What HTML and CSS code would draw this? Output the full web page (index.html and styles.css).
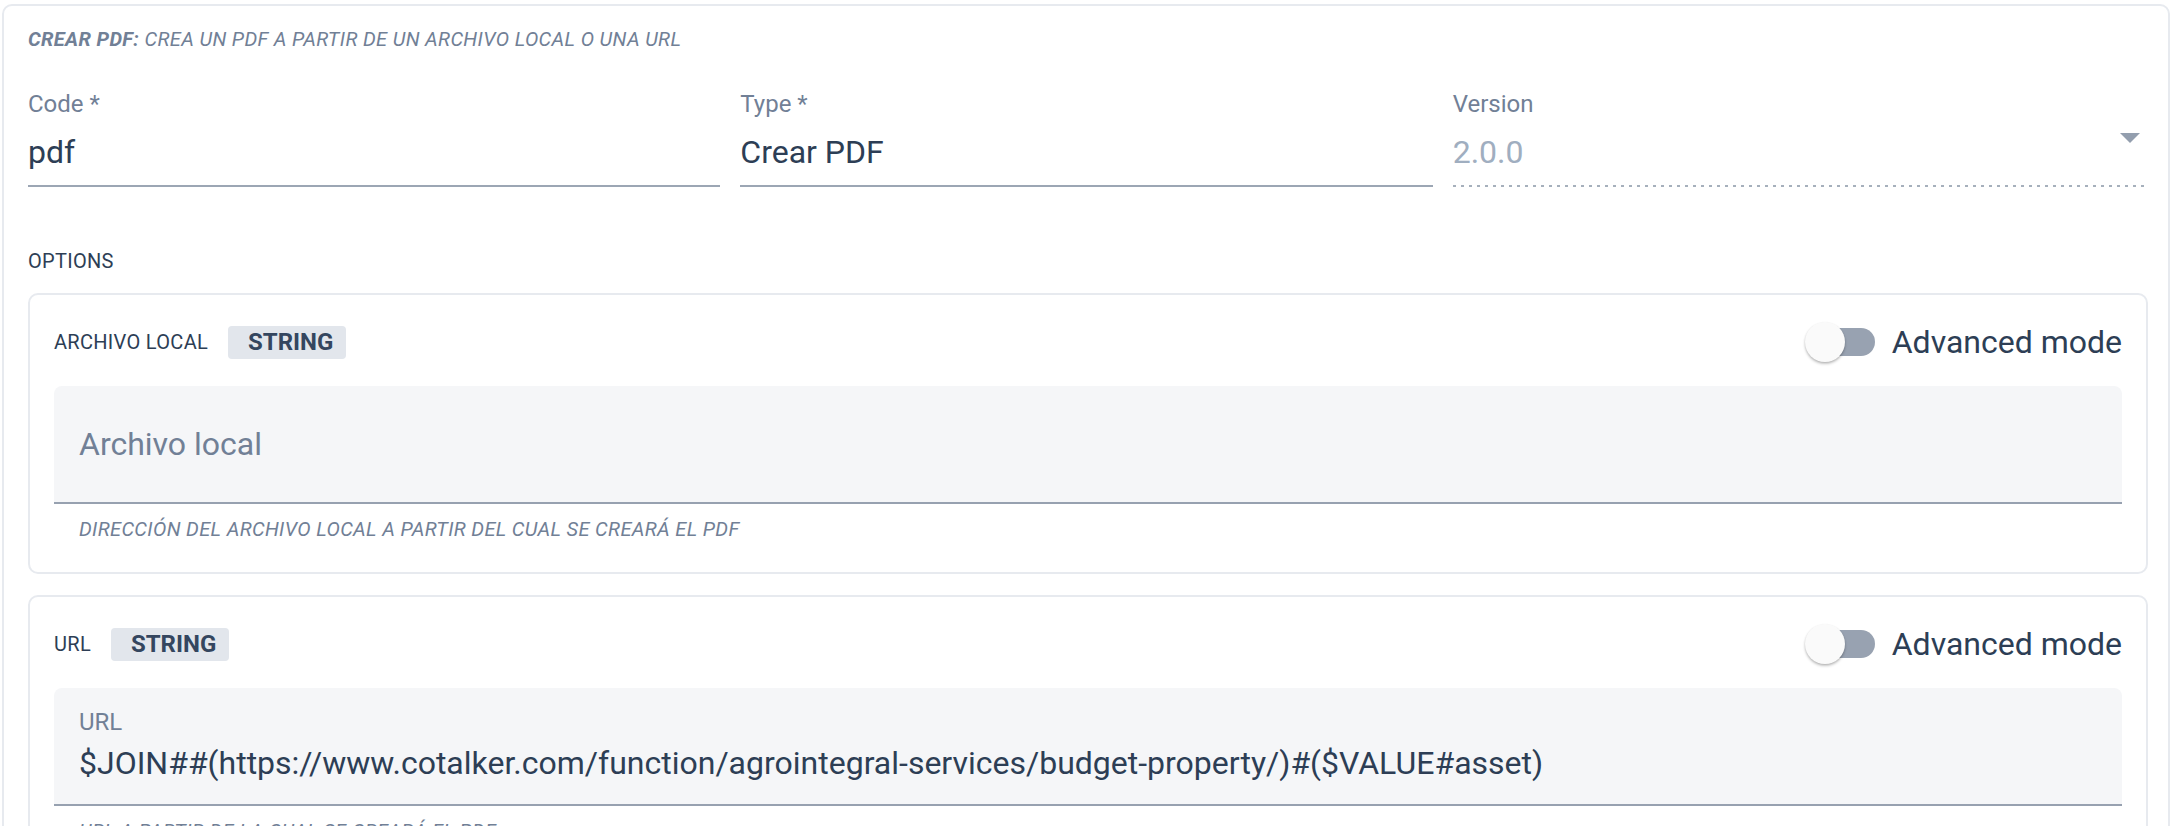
FILE: index.html
```html
<!DOCTYPE html>
<html lang="es">
<head>
<meta charset="utf-8">
<title>Crear PDF</title>
<link rel="stylesheet" href="styles.css">
</head>
<body>
<div class="panel">
  <p class="desc"><b>CREAR PDF:</b> CREA UN PDF A PARTIR DE UN ARCHIVO LOCAL O UNA URL</p>

  <div class="fields">
    <div class="field">
      <div class="field-label">Code *</div>
      <div class="field-value">pdf</div>
    </div>
    <div class="field">
      <div class="field-label">Type *</div>
      <div class="field-value">Crear PDF</div>
    </div>
    <div class="field field-disabled">
      <div class="field-label">Version</div>
      <div class="field-row">
        <div class="field-value">2.0.0</div>
        <svg class="caret" width="20" height="10" viewBox="0 0 20 10"><path d="M0 0 L20 0 L10 10 Z"/></svg>
      </div>
    </div>
  </div>

  <div class="section-title">OPTIONS</div>

  <div class="option-card">
    <div class="option-head">
      <span class="option-name">ARCHIVO LOCAL</span>
      <span class="badge">STRING</span>
      <div class="adv">
        <span class="switch"><span class="track"></span><span class="thumb"></span></span>
        <span class="adv-label">Advanced mode</span>
      </div>
    </div>
    <div class="filled filled-empty">
      <span class="placeholder">Archivo local</span>
    </div>
    <div class="hint">DIRECCIÓN DEL ARCHIVO LOCAL A PARTIR DEL CUAL SE CREARÁ EL PDF</div>
  </div>

  <div class="option-card">
    <div class="option-head">
      <span class="option-name">URL</span>
      <span class="badge">STRING</span>
      <div class="adv">
        <span class="switch"><span class="track"></span><span class="thumb"></span></span>
        <span class="adv-label">Advanced mode</span>
      </div>
    </div>
    <div class="filled">
      <div class="filled-label">URL</div>
      <div class="filled-value">$JOIN##(https://www.cotalker.com/function/agrointegral-services/budget-property/)#($VALUE#asset)</div>
    </div>
    <div class="hint">URL A PARTIR DE LA CUAL SE CREARÁ EL PDF</div>
  </div>
</div>
</body>
</html>
```

FILE: styles.css
```css
html, body {
  margin: 0;
  padding: 0;
  background: #ffffff;
  font-family: Roboto, "Noto Sans", "Liberation Sans", sans-serif;
  color: #2d3e55;
  overflow: hidden;
}

.panel {
  margin: 4px 0 0 2px;
  border: 2px solid #e7eaef;
  border-radius: 10px;
  padding: 19px 20px 40px 24px;
}

.desc {
  margin: 0;
  font-size: 20px;
  line-height: 28px;
  font-style: italic;
  letter-spacing: 0.35px;
  color: #718096;
}

.desc b {
  font-weight: 700;
}

.fields {
  display: grid;
  grid-template-columns: repeat(3, 1fr);
  column-gap: 20px;
  margin-top: 35px;
  margin-right: 3px;
}

.field {
  padding-bottom: 13px;
  border-bottom: 2px solid #9ca6b4;
}

.field-label {
  font-size: 24px;
  line-height: 32px;
  color: #718096;
}

.field-value {
  margin-top: 12px;
  font-size: 32px;
  line-height: 40px;
  color: #2d3e55;
}

.field-disabled {
  border-bottom: none;
  padding-bottom: 15px;
  background-image: linear-gradient(to right, #a6b0bc 0, #a6b0bc 3px, transparent 3px, transparent 8px);
  background-size: 8px 2px;
  background-repeat: repeat-x;
  background-position: left bottom;
}

.field-disabled .field-value {
  color: #a0aec0;
}

.field-row {
  display: flex;
  justify-content: space-between;
  align-items: flex-start;
}

.caret {
  fill: #939eae;
  margin-top: 13px;
  margin-right: 5px;
}

.section-title {
  margin-top: 60px;
  font-size: 20px;
  line-height: 28px;
  letter-spacing: 0.3px;
  color: #2d3e55;
}

.option-card {
  margin-top: 18px;
  border: 2px solid #e7eaef;
  border-radius: 10px;
  padding: 26px 24px 29px 24px;
}

.option-card + .option-card {
  margin-top: 21px;
}

.option-head {
  display: flex;
  align-items: center;
  height: 42px;
}

.option-name {
  font-size: 20px;
  line-height: 28px;
  letter-spacing: 0.3px;
  color: #2d3e55;
}

.badge {
  margin-left: 20px;
  background: #e2e6ec;
  border-radius: 4px;
  height: 33px;
  line-height: 33px;
  padding: 0 13px 0 20px;
  font-size: 24px;
  font-weight: 700;
  color: #34465f;
}

.adv {
  margin-left: auto;
  display: flex;
  align-items: center;
}

.switch {
  position: relative;
  width: 70px;
  height: 40px;
  display: inline-block;
}

.switch .track {
  position: absolute;
  left: 4px;
  top: 6px;
  width: 66px;
  height: 28px;
  border-radius: 14px;
  background: #98a2b1;
}

.switch .thumb {
  position: absolute;
  left: 0;
  top: 0;
  width: 40px;
  height: 40px;
  border-radius: 50%;
  background: #fafafa;
  box-shadow: 0 2px 3px rgba(0, 0, 0, 0.2), 0 1px 2px rgba(0, 0, 0, 0.12);
}

.adv-label {
  margin-left: 17px;
  font-size: 32px;
  line-height: 40px;
  color: #2d3e55;
}

.filled {
  margin-top: 23px;
  background: #f5f6f8;
  border-radius: 8px 8px 0 0;
  border-bottom: 2px solid #97a1b0;
  padding: 20px 25px 0 25px;
  box-sizing: border-box;
  height: 118px;
}

.filled-empty {
  display: flex;
  align-items: center;
  padding-top: 0;
}

.placeholder {
  font-size: 32px;
  line-height: 40px;
  color: #718096;
}

.filled-label {
  font-size: 24px;
  line-height: 28px;
  color: #718096;
}

.filled-value {
  margin-top: 7px;
  font-size: 32px;
  line-height: 40px;
  color: #2d3e55;
  white-space: nowrap;
}

.hint {
  margin-top: 11px;
  padding-left: 25px;
  font-size: 20px;
  line-height: 28px;
  font-style: italic;
  letter-spacing: 0.35px;
  color: #718096;
}
```
